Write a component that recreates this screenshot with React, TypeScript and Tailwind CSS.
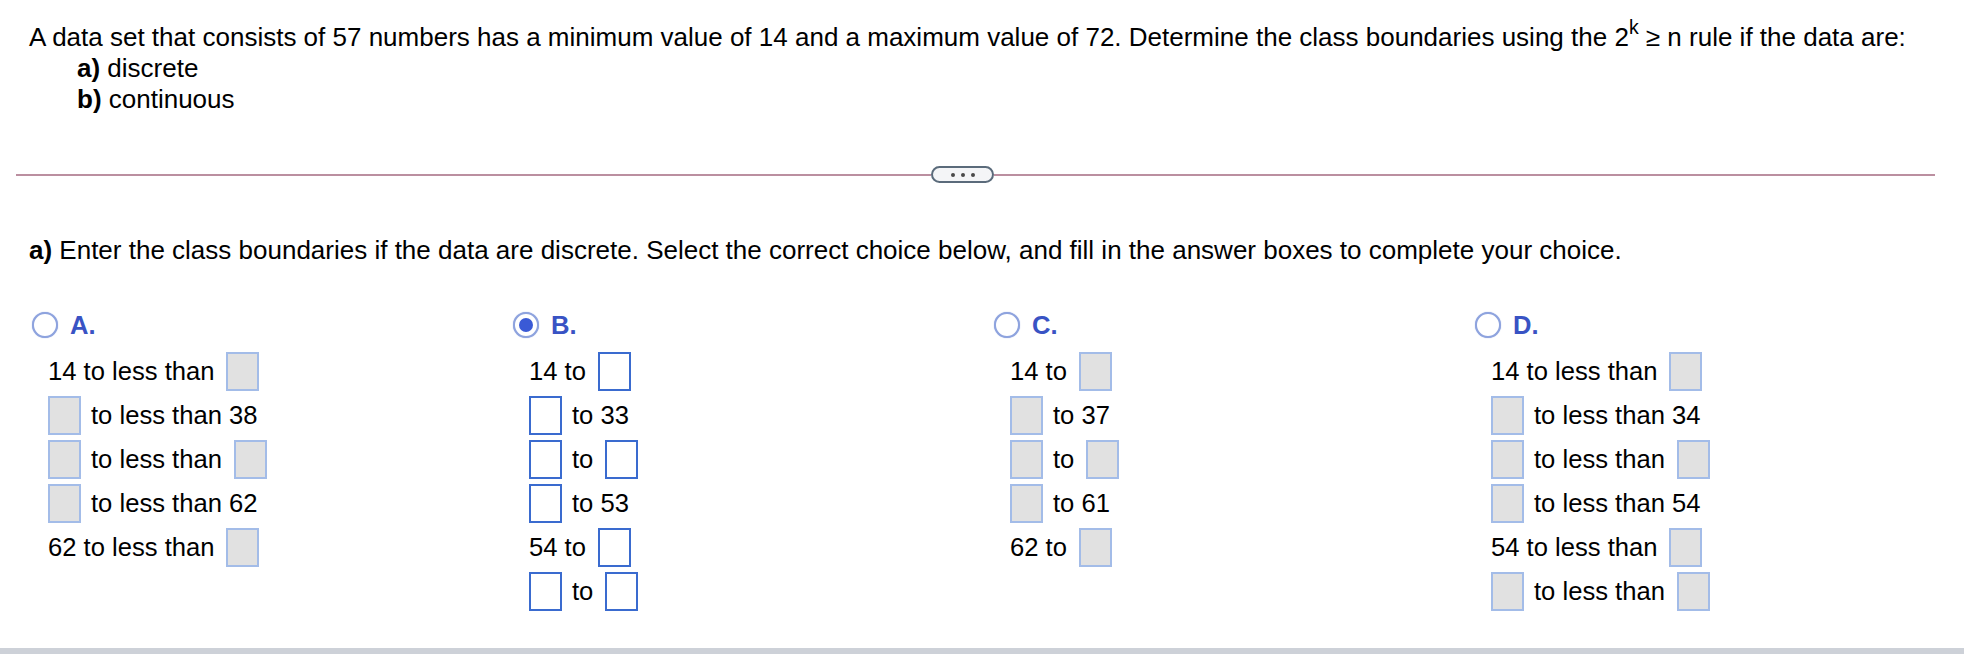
import type { JSX } from 'react';

type Part = string | null; // null = answer box

type Choice = {
  letter: string;
  selected: boolean;
  rows: Part[][];
};

const choices: Choice[] = [
  {
    letter: 'A.',
    selected: false,
    rows: [
      ['14 to less than', null],
      [null, 'to less than 38'],
      [null, 'to less than', null],
      [null, 'to less than 62'],
      ['62 to less than', null],
    ],
  },
  {
    letter: 'B.',
    selected: true,
    rows: [
      ['14 to', null],
      [null, 'to 33'],
      [null, 'to', null],
      [null, 'to 53'],
      ['54 to', null],
      [null, 'to', null],
    ],
  },
  {
    letter: 'C.',
    selected: false,
    rows: [
      ['14 to', null],
      [null, 'to 37'],
      [null, 'to', null],
      [null, 'to 61'],
      ['62 to', null],
    ],
  },
  {
    letter: 'D.',
    selected: false,
    rows: [
      ['14 to less than', null],
      [null, 'to less than 34'],
      [null, 'to less than', null],
      [null, 'to less than 54'],
      ['54 to less than', null],
      [null, 'to less than', null],
    ],
  },
];

function AnswerBox({ active, first }: { active: boolean; first: boolean }): JSX.Element {
  return (
    <span
      className={
        (first ? '' : 'ml-[12px] ') +
        (active
          ? 'w-[33px] h-[39px] shrink-0 border-2 border-[#3a6bcf] bg-white'
          : 'w-[33px] h-[39px] shrink-0 border-2 border-[#a3bce8] bg-[#e1e1e1]')
      }
    />
  );
}

function Radio({ checked }: { checked: boolean }): JSX.Element {
  return (
    <span className="w-[26px] h-[26px] rounded-full border-2 border-[#8ea3de] shadow-[0_0_1px_#8ea3de] bg-white flex items-center justify-center">
      {checked && <span className="w-[14px] h-[14px] rounded-full bg-[#3a5ad6]" />}
    </span>
  );
}

function ChoiceColumn({ choice }: { choice: Choice }): JSX.Element {
  return (
    <div>
      {/* radio + letter */}
      <div className="h-[26px] flex items-center gap-[12px]">
        <Radio checked={choice.selected} />
        <span className="font-bold text-[#3953c4]">{choice.letter}</span>
      </div>

      {/* answer rows */}
      <div className="mt-[14px] pl-[16px] flex flex-col gap-[5px]">
        {choice.rows.map((row, i) => (
          <div key={i} className="h-[39px] flex items-center">
            {row.map((part, j) =>
              part === null ? (
                <AnswerBox key={j} active={choice.selected} first={j === 0} />
              ) : (
                <span key={j} className={j === 0 ? 'whitespace-nowrap' : 'ml-[10px] whitespace-nowrap'}>
                  {part}
                </span>
              )
            )}
          </div>
        ))}
      </div>
    </div>
  );
}

export default function App(): JSX.Element {
  return (
    <div className="h-[654px] w-[1964px] overflow-hidden bg-white flex flex-col font-['Liberation_Sans',Arial,sans-serif] text-[25.6px] leading-[31px] text-black">
      {/* Question */}
      <div className="pt-[22px] pl-[29px] text-[26px]">
        <p className="whitespace-nowrap">
          A data set that consists of 57 numbers has a minimum value of 14 and a maximum value of 72. Determine the class
          boundaries using the 2<sup className="-top-[0.6em]">k</sup> ≥ n rule if the data are:
        </p>
        <div className="pl-[48px]">
          <p>
            <b>a)</b> discrete
          </p>
          <p>
            <b>b)</b> continuous
          </p>
        </div>
      </div>

      {/* Divider with expand pill */}
      <div className="mt-[51px] ml-[16px] w-[1919px] h-[17px] flex items-center">
        <div className="w-[915px] h-[2px] bg-[#bb8fa0]" />
        <div className="w-[63px] h-[17px] rounded-full border-2 border-[#5b6b7b] bg-[#f4f5f7] flex items-center justify-center gap-[6px]">
          <span className="w-[4px] h-[4px] rounded-full bg-[#4a4a4a]" />
          <span className="w-[4px] h-[4px] rounded-full bg-[#4a4a4a]" />
          <span className="w-[4px] h-[4px] rounded-full bg-[#4a4a4a]" />
        </div>
        <div className="flex-1 h-[2px] bg-[#bb8fa0]" />
      </div>

      {/* Part a */}
      <p className="mt-[52px] pl-[29px] whitespace-nowrap text-[26px]">
        <b>a)</b> Enter the class boundaries if the data are discrete. Select the correct choice below, and fill in the
        answer boxes to complete your choice.
      </p>

      <div className="mt-[46px] pl-[32px] grid grid-cols-[repeat(4,481px)]">
        {choices.map((c) => (
          <ChoiceColumn key={c.letter} choice={c} />
        ))}
      </div>

      <div className="mt-auto h-[6px] bg-[#cdd1d8]" />
    </div>
  );
}
